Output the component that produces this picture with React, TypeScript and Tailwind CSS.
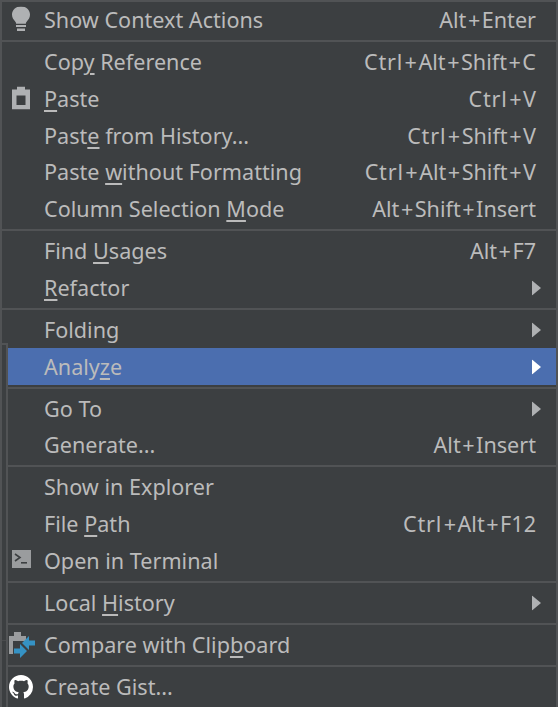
import React from "react";

type Row = { parts: [string, string, string] | [string]; sc?: string; icon?: React.ReactNode; arrow?: boolean; active?: boolean };

const Bulb = () => (
  <svg width="18" height="25" viewBox="0 0 18 25" className="block -translate-y-[1px]">
    <path d="M9 0C3.800 0 0 3.500 0 8.300c0 3 1.600 4.800 2.800 6.300.8 1 1.300 1.700 1.300 2.600h9.800c0-.9.500-1.600 1.300-2.600C16.400 13.100 18 11.300 18 8.300 18 3.500 14.200 0 9 0z" fill="#afb1b3" />
    <rect x="4" y="18.500" width="10" height="2" fill="#afb1b3" />
    <rect x="5" y="22" width="8" height="2.500" fill="#afb1b3" />
  </svg>
);
const Clip = () => (
  <svg width="18" height="23" viewBox="0 0 18 23" className="block -translate-y-[1px]">
    <path fillRule="evenodd" d="M0 3h5V0h8v3h5v20H0zM4.500 9v9.500h9V9z" fill="#afb1b3" />
  </svg>
);
const Term = () => (
  <svg width="19" height="18" viewBox="0 0 19 18" className="block -translate-y-[2px]">
    <rect width="19" height="18" fill="#9a9c9e" />
    <path d="M3 4l5 3.500L3 11" fill="none" stroke="#3c3f41" strokeWidth="1.600" />
    <rect x="9" y="12" width="6" height="1.600" fill="#3c3f41" />
  </svg>
);
const Compare = () => (
  <svg width="28" height="28" viewBox="0 0 28 28" className="ml-[2px] block">
    <path d="M1 5h5V1h7v4h5v5H5v13H1z" fill="#9a9c9e" />
    <path d="M14 12L21 5v4.500h6v5h-6V19z" fill="#3592c4" />
    <path d="M19 20L12 13v4.500H6v5h6V27z" fill="#3592c4" />
  </svg>
);
const Github = () => (
  <svg width="24" height="24" viewBox="0 0 16 16" className="block">
    <path fill="#ffffff" d="M8 0C3.580 0 0 3.580 0 8c0 3.540 2.290 6.530 5.470 7.590.4.070.55-.170.55-.380 0-.190-.010-.820-.010-1.490-2.010.370-2.530-.490-2.690-.940-.090-.230-.480-.940-.820-1.130-.280-.150-.680-.520-.010-.530.630-.010 1.080.580 1.230.820.720 1.210 1.870.870 2.330.660.070-.520.280-.870.510-1.070-1.780-.200-3.640-.890-3.640-3.950 0-.870.310-1.590.820-2.150-.080-.200-.360-1.020.080-2.120 0 0 .670-.210 2.200.820.640-.180 1.320-.270 2-.270s1.360.090 2 .270c1.530-1.040 2.200-.820 2.200-.820.440 1.100.160 1.920.080 2.120.510.560.820 1.270.820 2.150 0 3.070-1.870 3.750-3.650 3.950.290.250.540.730.540 1.480 0 1.070-.010 1.930-.010 2.200 0 .210.150.460.550.380A8.010 8.010 0 0 0 16 8c0-4.420-3.580-8-8-8z" />
  </svg>
);

const sections: Row[][] = [
  [{ parts: ["Show Context Actions"], sc: "Alt+Enter", icon: <Bulb /> }],
  [
    { parts: ["Cop", "y", " Reference"], sc: "Ctrl+Alt+Shift+C" },
    { parts: ["", "P", "aste"], sc: "Ctrl+V", icon: <Clip /> },
    { parts: ["Past", "e", " from History..."], sc: "Ctrl+Shift+V" },
    { parts: ["Paste ", "w", "ithout Formatting"], sc: "Ctrl+Alt+Shift+V" },
    { parts: ["Column Selection ", "M", "ode"], sc: "Alt+Shift+Insert" },
  ],
  [
    { parts: ["Find ", "U", "sages"], sc: "Alt+F7" },
    { parts: ["", "R", "efactor"], arrow: true },
  ],
  [
    { parts: ["Folding"], arrow: true },
    { parts: ["Analy", "z", "e"], arrow: true, active: true },
  ],
  [
    { parts: ["Go To"], arrow: true },
    { parts: ["Generate..."], sc: "Alt+Insert" },
  ],
  [
    { parts: ["Show in Explorer"] },
    { parts: ["File ", "P", "ath"], sc: "Ctrl+Alt+F12" },
    { parts: ["Open in Terminal"], icon: <Term /> },
  ],
  [{ parts: ["Local ", "H", "istory"], arrow: true }],
  [{ parts: ["Compare with Clip", "b", "oard"], icon: <Compare /> }],
  [{ parts: ["Create Gist..."], icon: <Github /> }],
];

function Shortcut({ text }: { text: string }) {
  const keys = text.split("+");
  return (
    <span className="ml-auto whitespace-pre">
      {keys.map((k, i) => (
        <React.Fragment key={i}>
          {i > 0 && <span className="mx-[1.5px]">+</span>}
          <span className={k === "Ctrl" ? "tracking-[0.8px]" : ""}>{k}</span>
        </React.Fragment>
      ))}
    </span>
  );
}

function MenuRow({ row }: { row: Row }) {
  return (
    <div className={`relative flex h-[36.75px] items-center pr-[20px] ${row.active ? "-mt-[0.2px] mb-[0.2px] ml-[6px] bg-[#4b6eaf] pl-[36px]" : "pl-[42px]"}`}>
      {row.icon && (
        <span className="absolute left-[-2px] top-1/2 flex w-[42px] -translate-y-1/2 justify-center">
          {row.icon}
        </span>
      )}
      <span className="whitespace-pre">
        {row.parts[0]}
        {row.parts[1] && <u className="underline decoration-[2px] underline-offset-[3px]">{row.parts[1]}</u>}
        {row.parts[2]}
      </span>
      {row.sc && <Shortcut text={row.sc} />}
      {row.arrow && (
        <svg width="9" height="15" viewBox="0 0 9 15" className="absolute right-[15px] top-1/2 -translate-y-1/2">
          <path d="M0 0l9 7.500L0 15z" fill={row.active ? "#ffffff" : "#afb1b3"} />
        </svg>
      )}
    </div>
  );
}

export default function App() {
  return (
    <div className="relative h-[707px] w-[558px] overflow-hidden border-2 border-b-0 border-[#515355] bg-[#3c3f41] font-['Noto_Sans',sans-serif] text-[21.6px] text-[#bbbbbb]">
      {sections.map((rows, i) => (
        <div key={i} className={i === 0 ? "" : "mt-[1.5px] border-t-2 border-[#515355] pt-[1.78px]"}>
          {rows.map((r, j) => (
            <MenuRow key={j} row={r} />
          ))}
        </div>
      ))}
      <div className="absolute left-[-2px] top-[341px] h-[366px] w-[8px] border-r-2 border-t-2 border-[#515355] bg-[#3c3f41]">
        <div className="mt-[295px] h-px bg-[#4a4c4e]" />
      </div>
    </div>
  );
}
